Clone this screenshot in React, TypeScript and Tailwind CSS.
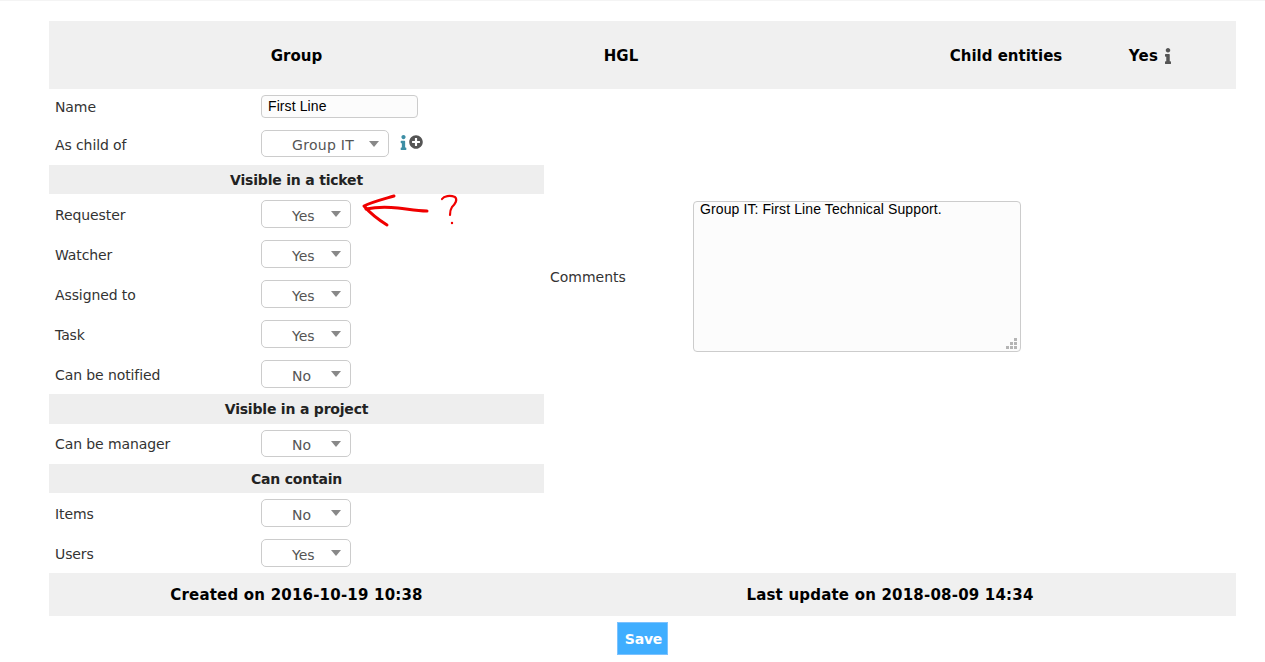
import { FaInfo, FaPlusCircle } from "react-icons/fa";

function Dropdown({ value, width, compact }: { value: string; width: string; compact?: boolean }) {
  return (
    <div className={`relative ${compact ? "h-[27px] leading-[28px]" : "h-[28px] leading-[30px]"} ${width} rounded-[5px] border border-[#cccccc] bg-white text-[14px] text-[#555555]`}>
      <span className="absolute left-[30px]">{value}</span>
      <span className="absolute right-[9px] top-[10px] h-0 w-0 border-x-[5px] border-t-[6px] border-x-transparent border-t-[#888888]" />
    </div>
  );
}

function Label({ children, top = "pt-[2px]" }: { children: string; top?: string }) {
  return (
    <div className={`w-[212px] pl-[6px] ${top} text-[14px] tracking-[-0.1px] text-[#333333]`}>
      {children}
    </div>
  );
}

function Row({ label, value, compact }: { label: string; value: string; compact?: boolean }) {
  return (
    <div className={`flex h-[40px] ${compact ? "items-start pt-[6px]" : "items-center"}`}>
      <Label top={compact ? "pt-[4px]" : "pt-[2px]"}>{label}</Label>
      <Dropdown value={value} width="w-[90px]" compact={compact} />
    </div>
  );
}

function Section({ title, height, pad }: { title: string; height: string; pad: string }) {
  return (
    <div className={`flex ${height} ${pad} items-center justify-center bg-[#eeeeee] text-[14px] font-bold tracking-[-0.2px] text-[#222222]`}>
      {title}
    </div>
  );
}

export default function App() {
  return (
    <div className="relative h-[662px] w-[1265px] overflow-hidden bg-white font-['DejaVu_Sans',sans-serif]">
      <div className="h-px bg-[#f4f4f4]" />
      <div className="mx-[49px] mt-[20px] w-[1187px]">
        {/* header */}
        <div className="flex h-[68px] items-center bg-[#f0f0f0] pt-[2px] text-[15px] font-bold text-black">
          <div className="w-[495px] text-center">Group</div>
          <div className="w-[154px] text-center">HGL</div>
          <div className="w-[251px]" />
          <div className="w-[114px] text-center whitespace-nowrap">Child entities</div>
          <div className="flex w-[173px] items-center justify-center gap-[2px] pl-[6px] tracking-[0.3px]">
            Yes <FaInfo className="h-[16px] w-[16px] text-[#555555]" />
          </div>
        </div>

        <div className="flex">
          {/* left column */}
          <div className="w-[495px]">
            <div className="flex h-[35px] items-center">
              <Label>Name</Label>
              <input
                readOnly
                value="First Line"
                className="h-[23px] w-[157px] rounded-[4px] border border-[#cccccc] bg-[#fcfcfc] px-[6px] pb-[2px] font-['Liberation_Sans',sans-serif] text-[14px] tracking-[0.1px] text-black"
              />
            </div>
            <div className="flex h-[41px] items-start pt-[6px]">
              <Label top="pt-[5px]">As child of</Label>
              <div className="tracking-[0.3px]">
                <Dropdown value="Group IT" width="w-[128px]" compact />
              </div>
              <FaInfo className="ml-[7px] mt-[5px] h-[15px] w-[15px] text-[#3d8ea5]" />
              <FaPlusCircle className="-ml-[2px] mt-[5px] h-[14px] w-[14px] text-[#555555]" />
            </div>
            <Section title="Visible in a ticket" height="h-[29px]" pad="pt-[2px]" />
            <Row label="Requester" value="Yes" />
            <Row label="Watcher" value="Yes" />
            <Row label="Assigned to" value="Yes" />
            <Row label="Task" value="Yes" />
            <Row label="Can be notified" value="No" />
            <Section title="Visible in a project" height="h-[30px]" pad="pt-0" />
            <Row label="Can be manager" value="No" compact />
            <Section title="Can contain" height="h-[29px]" pad="pt-[2px]" />
            <Row label="Items" value="No" />
            <Row label="Users" value="Yes" />
          </div>

          {/* comments */}
          <div className="flex flex-1 items-center pb-[110px]">
            <div className="w-[149px] pl-[6px] pt-[2px] text-[14px] text-[#333333]">Comments</div>
            <div className="relative h-[151px] w-[328px]">
              <textarea
                readOnly
                value="Group IT: First Line Technical Support."
                className="h-full w-full resize-none rounded-[4px] border border-[#cccccc] bg-[#fcfcfc] px-[6px] py-0 font-['Liberation_Sans',sans-serif] text-[14px] leading-[15px] tracking-[0.1px] text-black"
              />
              <svg className="absolute bottom-[3px] right-[4px]" width="11" height="11" viewBox="0 0 11 11" fill="#b5b5b5">
                <rect x="8" y="0" width="3" height="3" />
                <rect x="4" y="4" width="3" height="3" />
                <rect x="8" y="4" width="3" height="3" />
                <rect x="0" y="8" width="3" height="3" />
                <rect x="4" y="8" width="3" height="3" />
                <rect x="8" y="8" width="3" height="3" />
              </svg>
            </div>
          </div>
        </div>

        {/* footer */}
        <div className="flex h-[43px] items-center bg-[#f0f0f0] pt-[2px] text-[15px] font-bold tracking-[0.2px] text-black">
          <div className="w-[495px] text-center">Created on 2016-10-19 10:38</div>
          <div className="flex-1 text-center">Last update on 2018-08-09 14:34</div>
        </div>

        <div className="mt-[6px] flex justify-center">
          <button className="h-[33px] w-[51px] border border-[#7cc2ff] bg-[#40aeff] pl-[2px] pt-[1px] text-[14px] font-bold tracking-[-0.2px] text-white">
            Save
          </button>
        </div>
      </div>

      {/* red hand-drawn annotation */}
      <svg className="absolute left-0 top-0" width="1265" height="662" fill="none" stroke="#f00000" strokeWidth="3" strokeLinecap="round" strokeLinejoin="round">
        <path d="M394 196 C384 199 372 202 364 206 C370 213 379 220 387 225" />
        <path d="M366 209 C376 207 388 207 398 208 C408 209 416 211 427 211" />
        <path d="M442 199 C444 196 450 195 455 197 C458 200 455 204 452 207 C450 210 450 212 450 215" strokeWidth="2.2" />
        <circle cx="452" cy="223" r="0.6" strokeWidth="1.2" />
      </svg>
    </div>
  );
}
